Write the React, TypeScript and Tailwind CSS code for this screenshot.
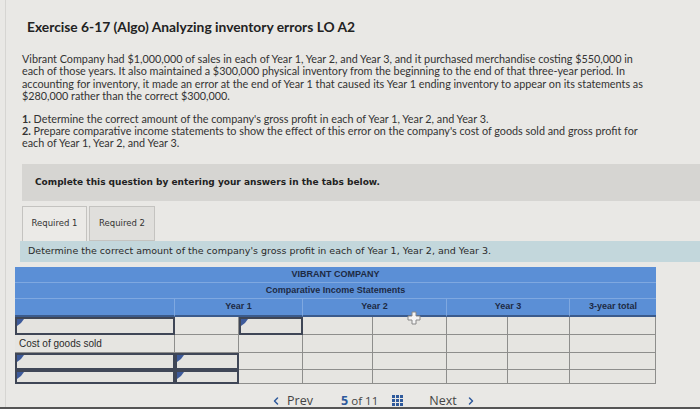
import React from "react";
import { ChevronLeft, ChevronRight } from "lucide-react";

// Column widths of the statement grid (label, Y1 a/b, Y2 a/b, Y3 a/b, total)
const cols = "grid-cols-[160px_64px_64px_70px_74px_61px_62px_86px]";

// Which body cells hold an input box: [row][col]
const inputs: boolean[][] = [
  [true, false, true, false, false, false, false, false],
  [false, false, false, false, false, false, false, false],
  [true, true, false, false, false, false, false, false],
  [true, true, false, false, false, false, false, false],
];

const rowHeights = ["h-[18px]", "h-[18px]", "h-[17px]", "h-[14px]"];

const intro = [
  "Vibrant Company had $1,000,000 of sales in each of Year 1, Year 2, and Year 3, and it purchased merchandise costing $550,000 in",
  "each of those years. It also maintained a $300,000 physical inventory from the beginning to the end of that three-year period. In",
  "accounting for inventory, it made an error at the end of Year 1 that caused its Year 1 ending inventory to appear on its statements as",
  "$280,000 rather than the correct $300,000.",
];

const Cell: React.FC<{ input: boolean; label?: string; h: string }> = ({ input, label, h }) => {
  if (input) {
    return (
      <div className={`relative ${h} border-2 border-[#3f4656] bg-[#e4e3df]`}>
        <span className="absolute left-0 top-0 h-0 w-0 border-l-[4px] border-t-[4px] border-l-[#3d5a9a] border-t-[#3d5a9a] border-r-[3px] border-b-[3px] border-r-transparent border-b-transparent" />
      </div>
    );
  }
  return (
    <div className={`${h} flex items-center border-r border-b border-[#8e8e8c] bg-[#e6e5e1] pl-1 text-[10px] text-[#2a2a2a]`}>
      {label}
    </div>
  );
};

export default function App() {
  return (
    <div className="relative h-[409px] w-[700px] overflow-hidden bg-[#e9e8e5] font-['Lato',sans-serif] text-[#2f2f2f]">
      <div className="absolute left-[5px] top-0 h-full w-px bg-[#d6d5d2]" />
      <div className="pl-[22px]">
        <h1 className="pt-[18px] pl-[5px] text-[13.8px] font-bold leading-[18px] text-[#222]">
          Exercise 6-17 (Algo) Analyzing inventory errors LO A2
        </h1>
        <div className="mt-[17px] whitespace-nowrap text-[10.8px] leading-[12.4px] text-[#333]">
          {intro.map((line) => (
            <div key={line}>{line}</div>
          ))}
        </div>
        <div className="mt-[10px] whitespace-nowrap text-[10.8px] leading-[12.4px] text-[#333]">
          <div>
            <b>1.</b> Determine the correct amount of the company's gross profit in each of Year 1, Year 2, and Year 3.
          </div>
          <div>
            <b>2.</b> Prepare comparative income statements to show the effect of this error on the company's cost of goods sold and gross profit for
          </div>
          <div>each of Year 1, Year 2, and Year 3.</div>
        </div>
      </div>

      <div className="ml-[22px] mt-[14px] flex h-[37px] items-center bg-[#d6d5d2] pl-[13px] font-['DejaVu_Sans',sans-serif] text-[9px] font-bold text-[#222]">
        Complete this question by entering your answers in the tabs below.
      </div>

      <div className="ml-[22px] mt-[5px] flex h-[35px] items-stretch gap-[2px] font-['DejaVu_Sans',sans-serif] text-[8.5px] text-[#333]">
        <div className="flex w-[65px] items-center justify-center border border-b-0 border-[#c4c3c0] bg-[#ebeae7]">Required 1</div>
        <div className="flex w-[66px] items-center justify-center border border-[#c4c3c0] bg-[#e0dfdc]">Required 2</div>
      </div>

      <div className="ml-[20px] flex h-[21px] items-center bg-[#c3d7dc] pl-[8px] font-['DejaVu_Sans',sans-serif] text-[9.5px] text-[#2a2a2a]">
        Determine the correct amount of the company's gross profit in each of Year 1, Year 2, and Year 3.
      </div>

      <div className={`relative ml-[15px] mt-[5px] grid w-[641px] ${cols} font-['Liberation_Sans',sans-serif]`}>
        <div className="col-span-8 flex h-[16px] items-center justify-center border-b border-[#7fa8e0] bg-[#5b8fd6] text-[9px] font-bold text-[#1d2a44]">
          VIBRANT COMPANY
        </div>
        <div className="col-span-8 flex h-[16px] items-center justify-center border-b border-[#7fa8e0] bg-[#5b8fd6] text-[9px] font-bold text-[#1d2a44]">
          Comparative Income Statements
        </div>
        <div className="h-[18px] border-r border-b-2 border-r-[#7fa8e0] border-b-[#3b5b8c] bg-[#5b8fd6]" />
        <div className="col-span-2 flex h-[18px] items-center justify-center border-r border-b-2 border-r-[#7fa8e0] border-b-[#3b5b8c] bg-[#5b8fd6] text-[9px] font-bold text-[#1d2a44]">
          Year 1
        </div>
        <div className="col-span-2 flex h-[18px] items-center justify-center border-r border-b-2 border-r-[#7fa8e0] border-b-[#3b5b8c] bg-[#5b8fd6] text-[9px] font-bold text-[#1d2a44]">
          Year 2
        </div>
        <div className="col-span-2 flex h-[18px] items-center justify-center border-r border-b-2 border-r-[#7fa8e0] border-b-[#3b5b8c] bg-[#5b8fd6] text-[9px] font-bold text-[#1d2a44]">
          Year 3
        </div>
        <div className="flex h-[18px] items-center justify-center border-b-2 border-b-[#3b5b8c] bg-[#5b8fd6] text-[9px] font-bold text-[#1d2a44]">
          3-year total
        </div>

        {inputs.map((row, r) =>
          row.map((isInput, c) => (
            <Cell
              key={`${r}-${c}`}
              input={isInput}
              h={rowHeights[r]}
              label={r === 1 && c === 0 ? "Cost of goods sold" : undefined}
            />
          ))
        )}

        {/* mouse cursor sitting over the Year 2 header */}
        <svg className="absolute left-[392px] top-[44px]" width="14" height="14" viewBox="0 0 14 14">
          <path d="M5 1h4v4h4v4H9v4H5V9H1V5h4z" fill="#f4f4f4" stroke="#888" strokeWidth="1" />
        </svg>
      </div>

      <div className="absolute left-0 top-[394px] flex h-[14px] w-full items-start font-['Open_Sans',sans-serif] text-[12.5px] leading-[14px] text-[#444]">
        <span className="ml-[270px] flex items-center gap-[5px]">
          <ChevronLeft size={12} strokeWidth={3} className="text-[#2f5a9c]" /> Prev
        </span>
        <span className="ml-[28px]">
          <b className="text-[#2f5a9c]">5</b>&nbsp;<span className="text-[11.5px]">of 11</span>
        </span>
        <span className="ml-[14px] mt-[1px] grid grid-cols-3 gap-[1px]">
          {Array.from({ length: 9 }).map((_, i) => (
            <span key={i} className="h-[3px] w-[3px] bg-[#2f5a9c]" />
          ))}
        </span>
        <span className="ml-[26px] flex items-center gap-[8px]">
          Next <ChevronRight size={12} strokeWidth={3} className="text-[#2f5a9c]" />
        </span>
      </div>
      <div className="absolute bottom-0 left-0 h-[2px] w-full bg-[#555]" />
    </div>
  );
}
